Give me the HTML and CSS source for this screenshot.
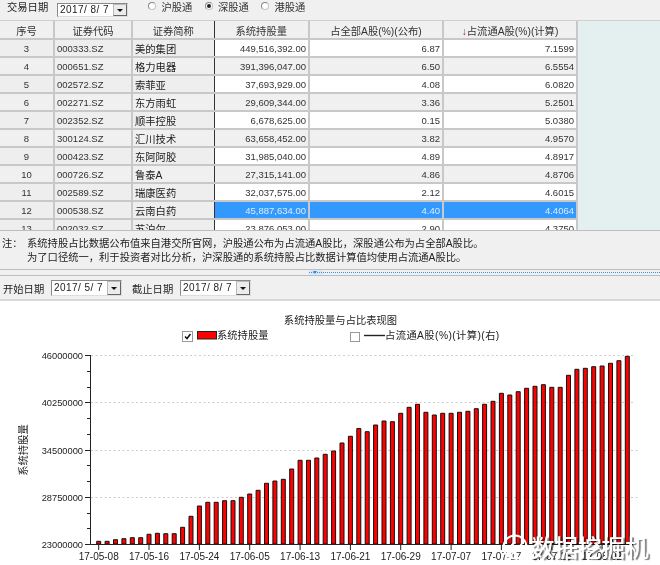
FILE: index.html
```html
<!DOCTYPE html>
<html lang="zh">
<head>
<meta charset="utf-8">
<title>系统持股量</title>
<link rel="stylesheet" href="styles.css">
</head>
<body>
<div class="app">
  <div class="toolbar">
    <span class="label">交易日期</span>
    <div class="date date-top"><span class="date-text">2017/ 8/ 7</span><span class="date-btn"></span></div>
    <div class="radios">
      <span class="radio"><i class="dot"></i>沪股通</span>
      <span class="radio"><i class="dot on"></i>深股通</span>
      <span class="radio"><i class="dot"></i>港股通</span>
    </div>
  </div>

  <div class="grid-wrap">
    <table class="grid">
      <colgroup>
        <col class="c1"><col class="c2"><col class="c3"><col class="c4"><col class="c5"><col class="c6">
      </colgroup>
      <thead>
        <tr><th>序号</th><th>证券代码</th><th class="freeze">证券简称</th><th>系统持股量</th><th>占全部A股(%)(公布)</th><th><span class="sort">↓</span>占流通A股(%)(计算)</th></tr>
      </thead>
      <tbody>
        <tr><td class="fix ctr">3</td><td class="fix">000333.SZ</td><td class="fix name freeze">美的集团</td><td class="num">449,516,392.00</td><td class="num">6.87</td><td class="num">7.1599</td></tr>
        <tr class="alt"><td class="fix ctr">4</td><td class="fix">000651.SZ</td><td class="fix name freeze">格力电器</td><td class="num">391,396,047.00</td><td class="num">6.50</td><td class="num">6.5554</td></tr>
        <tr><td class="fix ctr">5</td><td class="fix">002572.SZ</td><td class="fix name freeze">索菲亚</td><td class="num">37,693,929.00</td><td class="num">4.08</td><td class="num">6.0820</td></tr>
        <tr class="alt"><td class="fix ctr">6</td><td class="fix">002271.SZ</td><td class="fix name freeze">东方雨虹</td><td class="num">29,609,344.00</td><td class="num">3.36</td><td class="num">5.2501</td></tr>
        <tr><td class="fix ctr">7</td><td class="fix">002352.SZ</td><td class="fix name freeze">顺丰控股</td><td class="num">6,678,625.00</td><td class="num">0.15</td><td class="num">5.0380</td></tr>
        <tr class="alt"><td class="fix ctr">8</td><td class="fix">300124.SZ</td><td class="fix name freeze">汇川技术</td><td class="num">63,658,452.00</td><td class="num">3.82</td><td class="num">4.9570</td></tr>
        <tr><td class="fix ctr">9</td><td class="fix">000423.SZ</td><td class="fix name freeze">东阿阿胶</td><td class="num">31,985,040.00</td><td class="num">4.89</td><td class="num">4.8917</td></tr>
        <tr class="alt"><td class="fix ctr">10</td><td class="fix">000726.SZ</td><td class="fix name freeze">鲁泰A</td><td class="num">27,315,141.00</td><td class="num">4.86</td><td class="num">4.8706</td></tr>
        <tr><td class="fix ctr">11</td><td class="fix">002589.SZ</td><td class="fix name freeze">瑞康医药</td><td class="num">32,037,575.00</td><td class="num">2.12</td><td class="num">4.6015</td></tr>
        <tr class="sel"><td class="fix ctr">12</td><td class="fix">000538.SZ</td><td class="fix name freeze">云南白药</td><td class="num">45,887,634.00</td><td class="num">4.40</td><td class="num">4.4064</td></tr>
        <tr><td class="fix ctr">13</td><td class="fix">002032.SZ</td><td class="fix name freeze">苏泊尔</td><td class="num">23,876,053.00</td><td class="num">2.90</td><td class="num">4.3750</td></tr>
      </tbody>
    </table>
  </div>

  <div class="notes">
    <span class="note-tag">注：</span>
    <div class="note-body">
      <p>系统持股占比数据公布值来自港交所官网，沪股通公布为占流通A股比，深股通公布为占全部A股比。</p>
      <p>为了口径统一，利于投资者对比分析，沪深股通的系统持股占比数据计算值均使用占流通A股比。</p>
    </div>
  </div>

  <div class="splitter"><span class="grip"></span></div>

  <div class="range">
    <span class="label">开始日期</span>
    <div class="date"><span class="date-text">2017/ 5/ 7</span><span class="date-btn"></span></div>
    <span class="label label-end">截止日期</span>
    <div class="date"><span class="date-text">2017/ 8/ 7</span><span class="date-btn"></span></div>
  </div>

  <div class="chart">
    <svg class="plot" width="660" height="263" viewBox="0 302 660 263">
      <text class="title" x="340.5" y="325">系统持股量与占比表现图</text>

      <rect class="box" x="182.5" y="332.5" width="10" height="10"/>
      <path class="check" d="M185 337.5l2 2 3.5-4.5"/>
      <rect class="swatch" x="197.5" y="332.5" width="19" height="7.5"/>
      <text class="legend" x="217" y="340">系统持股量</text>
      <rect class="box" x="350.5" y="333.5" width="9" height="9"/>
      <path class="series" d="M364 336.5h21"/>
      <text class="legend legend-wide" x="385" y="340">占流通A股(%)(计算)(右)</text>

      <path class="gridline" d="M91 356.5H633M91 403.5H633M91 451.5H640M91 498.5H640"/>

      <path class="bars" d="M96.7 545V542.3h4V545zM105.1 545V542.3h4V545zM113.5 545V540.7h4V545zM121.9 545V539.7h4V545zM130.3 545V538.7h4V545zM138.7 545V538.7h4V545zM147 545V535.3h4V545zM155.4 545V534.3h4V545zM163.8 545V534.7h4V545zM172.2 545V534.7h4V545zM180.6 545V528.3h4V545zM189 545V517.3h4V545zM197.4 545V507h4V545zM205.8 545V503.3h4V545zM214.2 545V503.3h4V545zM222.6 545V501.7h4V545zM231 545V501.7h4V545zM239.3 545V498.3h4V545zM247.7 545V495h4V545zM256.1 545V491.3h4V545zM264.5 545V484.3h4V545zM272.9 545V482h4V545zM281.3 545V480.3h4V545zM289.7 545V470h4V545zM298.1 545V461.3h4V545zM306.5 545V461.3h4V545zM314.8 545V459h4V545zM323.2 545V455.3h4V545zM331.6 545V452h4V545zM340 545V444h4V545zM348.4 545V437.3h4V545zM356.8 545V429.5h4V545zM365.2 545V432.7h4V545zM373.6 545V426h4V545zM382 545V422h4V545zM390.4 545V422.7h4V545zM398.7 545V414.3h4V545zM407.1 545V408.3h4V545zM415.5 545V405.3h4V545zM423.9 545V413.3h4V545zM432.3 545V416h4V545zM440.7 545V414.3h4V545zM449.1 545V414.3h4V545zM457.5 545V413.3h4V545zM465.9 545V412.3h4V545zM474.3 545V409.7h4V545zM482.6 545V405.3h4V545zM491 545V402.3h4V545zM499.4 545V394.3h4V545zM507.8 545V396h4V545zM516.2 545V392.7h4V545zM524.6 545V389.3h4V545zM533 545V387.3h4V545zM541.4 545V385.7h4V545zM549.8 545V388.3h4V545zM558.2 545V388.3h4V545zM566.5 545V376.3h4V545zM574.9 545V370.3h4V545zM583.3 545V369.3h4V545zM591.7 545V367.7h4V545zM600.1 545V367h4V545zM608.5 545V364.3h4V545zM616.9 545V361.7h4V545zM625.3 545V357.3h4V545z"/>

      <path class="axis" d="M90.5 356V545.5H633"/>
      <path class="axis" d="M85 356.5h5.5M87 372.5h3.5M87 388.5h3.5M85 403.5h5.5M87 419.5h3.5M87 435.5h3.5M85 451.5h5.5M87 466.5h3.5M87 482.5h3.5M85 498.5h5.5M87 514.5h3.5M87 529.5h3.5M85 545.5h5.5"/>
      <path class="axis" d="M98.7 545v6M149 545v6M199.4 545v6M249.7 545v6M300.1 545v6M350.4 545v6M400.7 545v6M451.1 545v6M501.4 545v6M551.8 545v6M602.1 545v6"/>

      <g class="ylabels">
        <text x="83" y="360">46000000</text>
        <text x="83" y="407">40250000</text>
        <text x="83" y="454.5">34500000</text>
        <text x="83" y="502">28750000</text>
        <text x="83" y="548.5">23000000</text>
      </g>
      <text class="ytitle" transform="translate(27 451) rotate(-90)">系统持股量</text>
      <g class="xlabels">
        <text x="98.7" y="561">17-05-08</text>
        <text x="149" y="561">17-05-16</text>
        <text x="199.4" y="561">17-05-24</text>
        <text x="249.7" y="561">17-06-05</text>
        <text x="300.1" y="561">17-06-13</text>
        <text x="350.4" y="561">17-06-21</text>
        <text x="400.7" y="561">17-06-29</text>
        <text x="451.1" y="561">17-07-07</text>
        <text x="501.4" y="561">17-07-17</text>
        <text x="551.8" y="561">17-07-25</text>
        <text x="602.1" y="561">17-08-02</text>
      </g>
    </svg>
    <div class="watermark">
      <svg class="wm-logo" width="26" height="26" viewBox="0 0 26 26">
        <circle cx="13" cy="13" r="11.5"/>
        <path d="M6 15l7-7M10 20l10-10M9 12l6 6"/>
      </svg>
      <span class="wm-text">数据挖掘机</span>
    </div>
  </div>
</div>
</body>
</html>
```

FILE: styles.css
```css
* { box-sizing: border-box; }
html, body { margin: 0; padding: 0; }
body {
  width: 660px;
  height: 565px;
  overflow: hidden;
  background: #f0f0f0;
}
.app {
  width: 660px;
  height: 565px;
  overflow: hidden;
  color: #222;
  font-family: "Liberation Sans", "Noto Sans CJK SC", sans-serif;
  font-size: 10.3px;
  filter: blur(0.35px);
}

/* top bar */
.toolbar {
  height: 20px;
  display: flex;
  align-items: flex-start;
  padding: 1px 0 0 7px;
  background: #f0f0f0;
  line-height: 13px;
}
.label { width: 41px; white-space: nowrap; }
.date {
  width: 71px;
  height: 16px;
  display: flex;
  justify-content: space-between;
  align-items: stretch;
  background: #fff;
  border: 1px solid #888;
  border-right-color: #ddd;
  border-bottom-color: #ddd;
}
.date-top { margin: 2px 0 0 9px; height: 14px; }
.date-text {
  padding-left: 2px;
  font-size: 10px;
  letter-spacing: 0.45px;
  line-height: 14px;
  white-space: pre;
}
.date-top .date-text { line-height: 12px; }
.date-btn {
  width: 14px;
  position: relative;
  background: #ececec;
  border: 1px solid #bbb;
  border-right-color: #666;
  border-bottom-color: #666;
}
.date-btn::after {
  content: "";
  position: absolute;
  left: 3px;
  top: 50%;
  margin-top: -1px;
  border: 3px solid transparent;
  border-top: 3px solid #111;
  border-bottom: 0;
}
.radios { display: flex; margin-left: 20px; }
.radio { width: 56.5px; display: flex; align-items: center; gap: 5.5px; color: #333; }
.dot {
  width: 8px;
  height: 8px;
  margin-top: -3px;
  border-radius: 50%;
  background: #fff;
  border: 1px solid #c4c4c4;
  border-top-color: #888;
  border-left-color: #888;
  position: relative;
}
.dot.on::after {
  content: "";
  position: absolute;
  left: 1px;
  top: 1px;
  width: 4px;
  height: 4px;
  border-radius: 50%;
  background: #222;
}

/* data grid */
.grid-wrap {
  height: 211px;
  overflow: hidden;
  background: #e4f0f0;
  border-top: 1px solid #cfcfcf;
  border-bottom: 1px solid #bdbdbd;
}
.grid {
  width: 577px;
  table-layout: fixed;
  border-collapse: collapse;
}
.c1 { width: 54px; }
.c2 { width: 78px; }
.c3 { width: 82px; }
.c4 { width: 95px; }
.c5 { width: 134px; }
.c6 { width: 134px; }
.grid th {
  height: 18px;
  padding: 1px 0 0;
  background: #f0f0f0;
  font-weight: normal;
  color: #333;
  text-align: center;
  border-right: 2px solid #c8c8c8;
  border-bottom: 2px solid #c8c8c8;
  white-space: nowrap;
}
.grid td {
  height: 18px;
  padding: 1px 2px 0;
  background: #fff;
  border-right: 2px solid #c8c8c8;
  border-bottom: 2px solid #c8c8c8;
  white-space: nowrap;
  font-size: 9.5px;
  color: #333;
}
.grid tr.alt td { background: #f0f0f0; }
.grid td.fix { background: #eee; }
.grid .ctr { text-align: center; }
.grid .name { font-size: 10.3px; color: #222; }
.grid .num { text-align: right; }
.grid th.freeze, .grid td.freeze { border-right: 1px solid #333; }
.grid tr.sel td.num { background: #3399ff; color: #dcecff; }
.sort { color: #933; }

/* notes */
.notes {
  height: 38px;
  display: flex;
  padding: 6px 0 0 2px;
  line-height: 14px;
}
.note-tag { width: 25px; }
.note-body p { margin: 0; white-space: nowrap; }

/* splitter */
.splitter {
  height: 7px;
  position: relative;
  border-top: 1px solid #bdbdbd;
  border-bottom: 1px solid #bdbdbd;
}
.splitter::after {
  content: "";
  position: absolute;
  left: 309px;
  right: 0;
  top: 2px;
  border-top: 1px dotted #2f94ee;
}
.grip {
  position: absolute;
  left: 309px;
  top: 0;
  width: 14px;
  height: 5px;
  background: #dbe9f6;
}
.grip::after {
  content: "";
  position: absolute;
  left: 4px;
  top: 1px;
  border: 2px solid transparent;
  border-top: 3px solid #3388dd;
  border-bottom: 0;
}

/* date range */
.range {
  height: 25px;
  display: flex;
  align-items: center;
  padding-left: 3px;
  border-bottom: 2px solid #d8d8d8;
}
.range .label { padding-top: 1px; }
.range .date { margin-left: 7px; }
.range .label-end { margin-left: 10px; }

/* chart */
.chart {
  position: relative;
  height: 264px;
  background: #fff;
}
.plot { display: block; }
.plot text { font-family: "Liberation Sans", "Noto Sans CJK SC", sans-serif; fill: #222; }
.title { font-size: 10.3px; text-anchor: middle; }
.legend { font-size: 10.3px; }
.legend-wide { letter-spacing: 0.4px; }
.box { fill: #fff; stroke: #999; }
.check { fill: none; stroke: #111; stroke-width: 1.5; }
.swatch { fill: #f00; stroke: #222; }
.series { fill: none; stroke: #222; stroke-width: 1.4; }
.gridline { fill: none; stroke: #ccc; stroke-dasharray: 2 2.5; }
.bars { fill: #f00; stroke: #111; stroke-width: 1; }
.axis { fill: none; stroke: #222; stroke-width: 1; }
.ylabels text { font-size: 9.3px; text-anchor: end; }
.xlabels text { font-size: 10px; text-anchor: middle; }
.ytitle { font-size: 10.3px; text-anchor: middle; }

/* watermark over the chart */
.watermark {
  position: absolute;
  left: 502px;
  bottom: 5px;
  display: flex;
  align-items: center;
  gap: 3px;
}
.wm-logo circle, .wm-logo path {
  fill: none;
  stroke: #fff;
  stroke-width: 2;
}
.wm-text {
  color: #fff;
  font-family: "Noto Sans CJK SC", sans-serif;
  font-size: 23.5px;
  font-weight: 500;
  line-height: 26px;
  text-shadow: 2px 1px 1px rgba(0, 0, 0, 0.5);
}
```
